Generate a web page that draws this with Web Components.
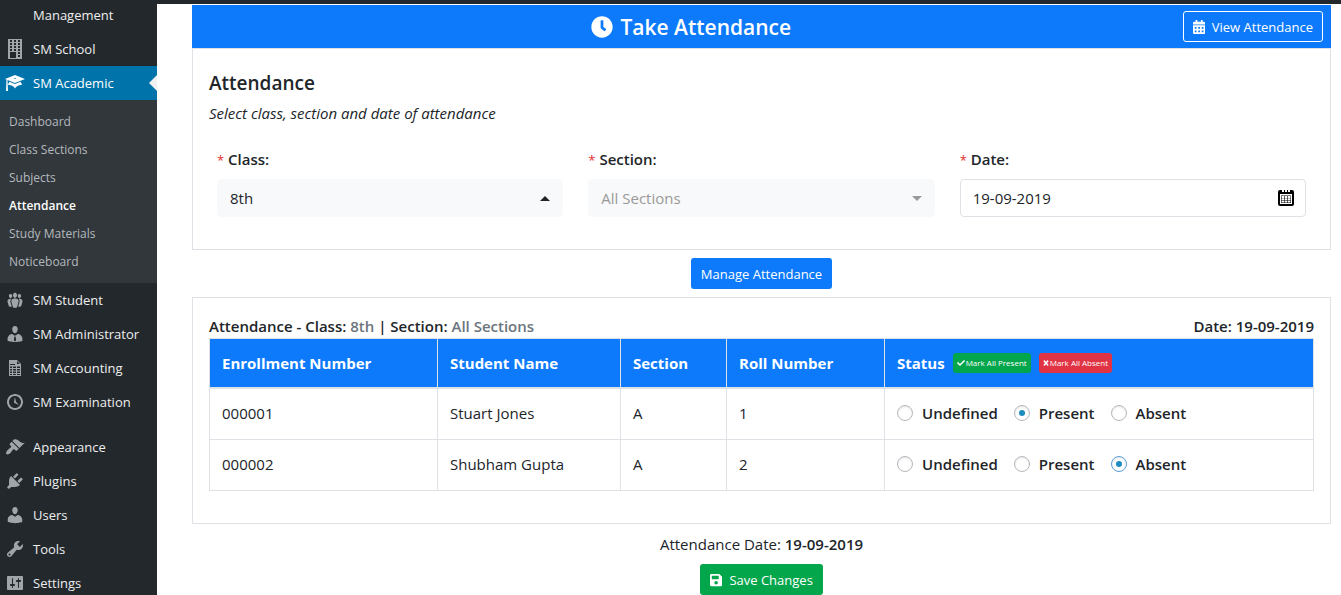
<!DOCTYPE html>
<html lang="en">
<head>
<meta charset="utf-8">
<title>Take Attendance</title>
<style>
  body {
    margin: 0;
    background: #fff;
    color: #212529;
    font: 15px/24px "Open Sans", "Noto Sans", sans-serif;
  }
</style>
</head>
<body>

<app-shell>
  <side-menu slot="menu">
    <menu-item>Management</menu-item>
    <menu-item icon="building">SM School</menu-item>
    <menu-item icon="cap" current>SM Academic</menu-item>
    <sub-menu items="Dashboard,Class Sections,Subjects,Attendance,Study Materials,Noticeboard" current="Attendance"></sub-menu>
    <menu-item icon="groups">SM Student</menu-item>
    <menu-item icon="businessman">SM Administrator</menu-item>
    <menu-item icon="spreadsheet">SM Accounting</menu-item>
    <menu-item icon="clock">SM Examination</menu-item>
    <menu-item icon="brush" separated>Appearance</menu-item>
    <menu-item icon="plug">Plugins</menu-item>
    <menu-item icon="user">Users</menu-item>
    <menu-item icon="wrench">Tools</menu-item>
    <menu-item icon="sliders">Settings</menu-item>
  </side-menu>

  <page-header>
    Take Attendance
    <action-button slot="action" kind="outline" icon="fa-calendar">View Attendance</action-button>
  </page-header>
  <filter-card></filter-card>
  <center-row><action-button kind="primary">Manage Attendance</action-button></center-row>
  <attendance-card></attendance-card>
  <center-row class="date">Attendance Date: <b>19-09-2019</b></center-row>
  <center-row><action-button kind="success" icon="fa-save">Save Changes</action-button></center-row>
</app-shell>

<style>
  .date { padding: 8px 0; }
  .date b { font-weight: 600; }
</style>

<script>
const ICONS = {
  building: ['0 0 20 20', 'M3 20h14V0H3v20zM7 3H5V1h2v2zm4 0H9V1h2v2zm4 0h-2V1h2v2zM7 6H5V4h2v2zm4 0H9V4h2v2zm4 0h-2V4h2v2zM7 9H5V7h2v2zm4 0H9V7h2v2zm4 0h-2V7h2v2zm-8 3H5v-2h2v2zm4 0H9v-2h2v2zm4 0h-2v-2h2v2zm-4 7H5v-6h6v6zm4-4h-2v-2h2v2zm0 3h-2v-2h2v2z'],
  cap: ['0 0 20 20', 'M10 10L2.54 7.02 3 18H1l.48-11.41L0 6l10-4 10 4zm0-5c-.55 0-1 .22-1 .5s.45.5 1 .5 1-.22 1-.5-.45-.5-1-.5zm0 6l5.57-2.23c.71.94 1.2 2.07 1.36 3.3-.3-.04-.61-.07-.93-.07-2.55 0-4.78 1.37-6 3.41C8.78 13.37 6.55 12 4 12c-.32 0-.63.03-.93.07.16-1.23.65-2.36 1.36-3.3z'],
  groups: ['0 0 20 20', 'M8.03 4.46c-.29 1.28.55 3.46 1.97 3.46 1.41 0 2.25-2.18 1.96-3.46-.22-.98-1.08-1.63-1.96-1.63-.89 0-1.74.65-1.97 1.63zm-4.13.9c-.25 1.08.47 2.93 1.67 2.93s1.92-1.85 1.67-2.93c-.19-.83-.92-1.39-1.67-1.39s-1.48.56-1.67 1.39zm8.86 0c-.25 1.08.47 2.93 1.66 2.93 1.2 0 1.92-1.85 1.67-2.93-.19-.83-.92-1.39-1.67-1.39-.74 0-1.47.56-1.66 1.39zm-.59 11.43l1.25-4.3C14.2 10 12.71 8.47 10 8.47c-2.72 0-4.21 1.53-3.44 4.02l1.26 4.3C8.05 17.51 9 18 10 18c.98 0 1.94-.49 2.17-1.21zm-6.1-7.63c-.49.67-.96 1.83-.42 3.59l1.12 3.79c-.34.2-.77.31-1.2.31-.85 0-1.65-.41-1.85-1.03l-1.07-3.65c-.65-2.11.61-3.4 2.92-3.4.27 0 .54.02.79.06-.1.1-.2.22-.29.33zm8.35-.39c2.31 0 3.58 1.29 2.92 3.4l-1.07 3.65c-.2.62-1 1.03-1.85 1.03-.43 0-.86-.11-1.2-.31l1.11-3.77c.55-1.78.08-2.94-.42-3.61-.08-.11-.18-.23-.28-.33.25-.04.51-.06.79-.06z'],
  businessman: ['0 0 20 20', 'M10 9.25c-2.27 0-2.73-3.44-2.73-3.44C7 4.02 7.82 2 9.97 2c2.16 0 2.98 2.02 2.71 3.81 0 0-.41 3.44-2.68 3.44zM7.2 10l2 1.6h1.6l2-1.6c2.4 0 4.6 2.3 4.6 4.6V17s-3.6 1-7.4 1-7.4-1-7.4-1v-2.4C2.6 12.3 4.7 10 7.2 10zm2.2 2.5l-.6 3.8 1.2 1.2 1.2-1.2-.6-3.8z'],
  spreadsheet: ['0 0 20 20', 'M12 2l4 4v12H4V2h8zm0 4h3l-3-3v3zM5 6v1h5V6H5zm0 2.5V10h2V8.5H5zm3 0V10h3V8.5H8zm4 0V10h3V8.5h-3zM5 11v1.5h2V11H5zm3 0v1.5h3V11H8zm4 0v1.5h3V11h-3zM5 13.5V15h2v-1.5H5zm3 0V15h3v-1.5H8zm4 0V15h3v-1.5h-3zM5 16v1h2v-1H5zm3 0v1h3v-1H8zm4 0v1h3v-1h-3z'],
  clock: ['0 0 20 20', 'M10 2c4.42 0 8 3.58 8 8s-3.58 8-8 8-8-3.58-8-8 3.58-8 8-8zm0 14c3.31 0 6-2.69 6-6s-2.69-6-6-6-6 2.69-6 6 2.69 6 6 6zm-.71-5.29c.07.05.14.1.23.15l-.02.02L14 13l-3.03-3.19L10 5l-.97 4.81h.01c0 .02-.01.05-.02.09S9 9.97 9 10c0 .28.1.52.29.71z'],
  brush: ['0 0 20 20', 'M14.48 11.06L7.41 3.99l1.5-1.5c.5-.56 2.3-.47 3.51.32 1.21.8 1.43 1.28 2.91 2.1 1.18.64 2.45 1.26 4.45.85zm-.71.71L6.7 4.7 4.93 6.47c-.39.39-.39 1.02 0 1.41l1.06 1.06c.39.39.39 1.03 0 1.42-.6.6-1.43 1.11-2.21 1.69-.35.26-.7.53-1.01.84C1.43 14.23.4 16.08 1.4 17.07c.99 1 2.84-.03 4.18-1.36.31-.31.58-.66.85-1.02.57-.78 1.08-1.61 1.69-2.21.39-.39 1.02-.39 1.41 0l1.06 1.06c.39.39 1.02.39 1.41 0z'],
  plug: ['0 0 20 20', 'M13.11 4.36L9.87 7.6 8 5.73l3.24-3.24c.35-.34 1.05-.2 1.56.32.52.51.66 1.21.31 1.55zm-8 1.77l.91-1.12 9.01 9.01-1.19.84c-.71.71-2.63 1.16-3.82 1.16H6.14L4.9 17.26c-.59.59-1.54.59-2.12 0-.59-.58-.59-1.53 0-2.12l1.24-1.24v-3.88c0-1.13.4-3.19 1.09-3.89zm7.26 3.97l3.24-3.24c.34-.35 1.04-.21 1.55.31.52.51.66 1.21.31 1.55l-3.24 3.25z'],
  user: ['0 0 20 20', 'M10 9.25c-2.27 0-2.73-3.44-2.73-3.44C7 4.02 7.82 2 9.97 2c2.16 0 2.98 2.02 2.71 3.81 0 0-.41 3.44-2.68 3.44zm0 2.57L12.72 10c2.39 0 4.52 2.33 4.52 4.53v2.49s-3.65 1.13-7.24 1.13c-3.65 0-7.24-1.13-7.24-1.13v-2.49c0-2.25 1.94-4.48 4.47-4.48z'],
  wrench: ['0 0 20 20', 'M16.68 9.77c-1.34 1.34-3.3 1.67-4.95.99l-5.41 6.52c-.99.99-2.59.99-3.58 0s-.99-2.59 0-3.57l6.52-5.42c-.68-1.65-.35-3.61.99-4.95 1.28-1.28 3.12-1.62 4.72-1.06l-2.89 2.89 2.82 2.82 2.86-2.87c.53 1.58.18 3.39-1.08 4.65zM3.81 16.21c.4.39 1.04.39 1.43 0 .4-.4.4-1.04 0-1.43-.39-.4-1.03-.4-1.43 0-.39.39-.39 1.03 0 1.43z'],
  sliders: ['0 0 20 20', 'M18 16V4c0-.55-.45-1-1-1H3c-.55 0-1 .45-1 1v12c0 .55.45 1 1 1h14c.55 0 1-.45 1-1zM8 11h1c.55 0 1 .45 1 1s-.45 1-1 1H8v1.5c0 .28-.22.5-.5.5s-.5-.22-.5-.5V13H6c-.55 0-1-.45-1-1s.45-1 1-1h1V5.5c0-.28.22-.5.5-.5s.5.22.5.5V11zm5-2h-1c-.55 0-1-.45-1-1s.45-1 1-1h1V5.5c0-.28.22-.5.5-.5s.5.22.5.5V7h1c.55 0 1 .45 1 1s-.45 1-1 1h-1v5.5c0 .28-.22.5-.5.5s-.5-.22-.5-.5V9z'],
  'fa-clock': ['0 0 512 512', 'M256,8C119,8,8,119,8,256S119,504,256,504,504,393,504,256,393,8,256,8Zm92.49,313h0l-20,25a16,16,0,0,1-22.49,2.5h0l-67-49.72a40,40,0,0,1-15-31.23V112a16,16,0,0,1,16-16h32a16,16,0,0,1,16,16V256l58,42.5A16,16,0,0,1,348.49,321Z'],
  'fa-calendar': ['0 0 448 512', 'M0 464c0 26 22 48 48 48h352c26 0 48-22 48-48V192H0zM448 160v-48c0-26-22-48-48-48h-48V12c0-7-5-12-12-12h-40c-7 0-12 5-12 12v52H160V12c0-7-5-12-12-12h-40c-7 0-12 5-12 12v52H48c-26 0-48 22-48 48v48zM64 256h64v64H64zm128 0h64v64h-64zm128 0h64v64h-64zM64 384h64v64H64zm128 0h64v64h-64zm128 0h64v64h-64z'],
  'fa-save': ['0 0 448 512', 'M433.941 129.941l-83.882-83.882A48 48 0 0 0 316.118 32H48C21.49 32 0 53.49 0 80v352c0 26.51 21.49 48 48 48h352c26.51 0 48-21.49 48-48V163.882a48 48 0 0 0-14.059-33.941zM224 416c-35.346 0-64-28.654-64-64 0-35.346 28.654-64 64-64s64 28.654 64 64c0 35.346-28.654 64-64 64zm96-304.52V212c0 6.627-5.373 12-12 12H76c-6.627 0-12-5.373-12-12V108c0-6.627 5.373-12 12-12h228.52c3.183 0 6.235 1.264 8.485 3.515l3.48 3.48A11.996 11.996 0 0 1 320 111.48z'],
  'fa-check': ['0 0 512 512', 'M173.898 439.404l-166.4-166.4c-9.997-9.997-9.997-26.206 0-36.204l36.203-36.204c9.997-9.998 26.207-9.998 36.204 0L192 312.69 432.095 72.596c9.997-9.997 26.207-9.997 36.204 0l36.203 36.204c9.997 9.997 9.997 26.206 0 36.204l-294.4 294.401c-9.998 9.997-26.207 9.997-36.204-.001z'],
  'fa-times': ['0 0 384 512', 'M20 136l68-68 104 104L296 68l68 68-104 120 104 120-68 68-104-104L88 444l-68-68 104-120z'],
  calendar: ['0 0 16 16', 'M2 0h2v2h2V0h1v2h2V0h1v2h2V0h2a2 2 0 0 1 2 2v12a2 2 0 0 1-2 2H2a2 2 0 0 1-2-2V2a2 2 0 0 1 2-2zm0 4v10h12V4zM3 5.4h10v7.700H3zm.5.500v2h2.600v-2zm3.200 0v2h2.600v-2zm3.200 0v2h2.600v-2zM3.500 8.300v2h2.600v-2zm3.200 0v2h2.600v-2zm3.200 0v2h2.600v-2zM3.500 10.700v1.900h2.600v-1.900zm3.200 0v1.900h2.600v-1.900zm3.200 0v1.900h2.600v-1.900z'],
};

function icon(name) {
  if (!ICONS[name]) return '';
  const [box, path] = ICONS[name];
  return `<svg viewBox="${box}" fill="currentColor" fill-rule="evenodd" aria-hidden="true"><path d="${path}"/></svg>`;
}

class BaseElement extends HTMLElement {
  constructor() {
    super();
    this.attachShadow({mode: 'open'});
  }

  connectedCallback() {
    this.shadowRoot.innerHTML = this.template();
  }
}

class AppShell extends BaseElement {
  template() {
    return `
      <style>
        :host {
          display: grid;
          grid-template: 4px minmax(0, 1fr) / 157px minmax(0, 1fr);
          height: 100vh;
          overflow: hidden;
        }
        header {
          grid-column: 1 / -1;
          background: #23282d;
        }
        main {
          padding: 1px 10px 0 35px;
        }
      </style>
      <header></header>
      <slot name="menu"></slot>
      <main><slot></slot></main>
    `;
  }
}
customElements.define('app-shell', AppShell);

class SideMenu extends BaseElement {
  template() {
    return `
      <style>
        :host {
          display: block;
          overflow: hidden;
          background: #23282d;
          font-size: 13px;
          line-height: 18px;
        }
        nav {
          /* the first entry is scrolled partly under the top bar */
          margin-top: -6px;
        }
      </style>
      <nav><slot></slot></nav>
    `;
  }
}
customElements.define('side-menu', SideMenu);

class MenuItem extends BaseElement {
  template() {
    return `
      <style>
        :host {
          display: block;
        }
        :host([separated]) {
          margin-top: 11px;
        }
        a {
          position: relative;
          display: grid;
          grid-template-columns: 20px 1fr;
          gap: 8px;
          align-items: center;
          min-height: 34px;
          padding: 0 5px;
          box-sizing: border-box;
          color: #eee;
          text-decoration: none;
        }
        span {
          grid-column: 2;
        }
        svg {
          width: 20px;
          height: 20px;
          color: #a0a5aa;
        }
        :host([current]) a {
          background: #0073aa;
          color: #fff;
        }
        :host([current]) svg {
          color: #fff;
        }
        :host([current]) a::after {
          content: '';
          position: absolute;
          right: 0;
          top: 9px;
          border: 8px solid transparent;
          border-left: none;
          border-right-color: #f1f1f1;
        }
      </style>
      <a href="#">${icon(this.getAttribute('icon'))}<span><slot></slot></span></a>
    `;
  }
}
customElements.define('menu-item', MenuItem);

class SubMenu extends BaseElement {
  template() {
    const current = this.getAttribute('current');
    const links = this.getAttribute('items').split(',').map((name) =>
      `<li><a href="#" class="${name === current ? 'current' : ''}">${name}</a></li>`).join('');

    return `
      <style>
        :host {
          display: block;
          font-size: 12px;
        }
        ul {
          margin: 0;
          padding: 8px 0 7px;
          list-style: none;
          background: #32373c;
        }
        a {
          display: block;
          padding: 5px 9px;
          color: #b4b9be;
          text-decoration: none;
        }
        .current {
          color: #fff;
          font-weight: 600;
        }
      </style>
      <ul>${links}</ul>
    `;
  }
}
customElements.define('sub-menu', SubMenu);

class PageHeader extends BaseElement {
  template() {
    return `
      <style>
        :host {
          display: flex;
          align-items: center;
          height: 43px;
          padding: 0 8px;
          background: #0d7afb;
          color: #fff;
        }
        h1 {
          flex: 1;
          display: flex;
          justify-content: center;
          align-items: center;
          gap: 7px;
          margin: 0;
          font-size: 21px;
          font-weight: 600;
        }
        svg {
          width: 22px;
          height: 22px;
        }
      </style>
      <h1>${icon('fa-clock')}<span><slot></slot></span></h1>
      <slot name="action"></slot>
    `;
  }
}
customElements.define('page-header', PageHeader);

class ActionButton extends BaseElement {
  template() {
    return `
      <style>
        :host {
          display: inline-block;
          vertical-align: top;
        }
        button {
          display: flex;
          align-items: center;
          gap: 7px;
          height: 31px;
          padding: 0 9px;
          border: 1px solid transparent;
          border-radius: 3px;
          color: #fff;
          font: inherit;
          font-size: 13px;
        }
        svg {
          height: 14px;
        }
        :host([kind="outline"]) button {
          background: none;
          border-color: #fff;
        }
        :host([kind="primary"]) button {
          background: #0d7afb;
        }
        :host([kind="success"]) button {
          background: #04a64b;
        }
        :host([kind="danger"]) button {
          background: #e03444;
        }
        :host([small]) button {
          gap: 1px;
          height: 20px;
          padding: 0 3px;
          font-size: 8px;
          font-weight: 400;
          line-height: 18px;
        }
        :host([small]) svg {
          height: 8px;
        }
      </style>
      <button type="button">${icon(this.getAttribute('icon'))}<span><slot></slot></span></button>
    `;
  }
}
customElements.define('action-button', ActionButton);

class CenterRow extends BaseElement {
  template() {
    return `
      <style>
        :host {
          display: block;
          text-align: center;
        }
      </style>
      <slot></slot>
    `;
  }
}
customElements.define('center-row', CenterRow);

class FilterCard extends BaseElement {
  template() {
    return `
      <style>
        :host {
          display: block;
          margin-bottom: 8px;
          padding: 22px 16px 32px;
          border: 1px solid #dee2e6;
        }
        h2 {
          margin: 0 0 6px;
          font-size: 19px;
          font-weight: 600;
        }
        p {
          margin: 0;
          font-style: italic;
        }
        form {
          display: grid;
          grid-template-columns: repeat(3, 1fr);
          gap: 25px;
          margin-top: 22px;
          padding: 0 8px;
        }
        label {
          display: block;
          margin-bottom: 8px;
          font-weight: 600;
        }
        i {
          color: #e02b2b;
          font-size: 13px;
          font-style: normal;
          font-weight: 400;
          line-height: 1;
        }
        .box {
          display: flex;
          align-items: center;
          position: relative;
        }
        select, input {
          width: 100%;
          height: 38px;
          padding: 0 12px;
          box-sizing: border-box;
          border: 1px solid #f8f9fa;
          border-radius: 4px;
          background: #f8f9fa;
          color: #212529;
          font: inherit;
          appearance: none;
        }
        select.empty {
          color: #999;
        }
        input {
          border-color: #dee2e6;
          background: #fff;
        }
        .caret {
          position: absolute;
          right: 13px;
          border: 5px solid transparent;
          border-top-color: #999;
          border-bottom: none;
        }
        .caret.up {
          border-top: none;
          border-bottom: 5px solid #212529;
        }
        svg {
          position: absolute;
          right: 12px;
          width: 16px;
          height: 16px;
          color: #000;
        }
      </style>
      <h2>Attendance</h2>
      <p>Select class, section and date of attendance</p>
      <form>
        <div>
          <label for="class"><i>*</i> Class:</label>
          <div class="box">
            <select id="class"><option>8th</option></select>
            <span class="caret up"></span>
          </div>
        </div>
        <div>
          <label for="section"><i>*</i> Section:</label>
          <div class="box">
            <select id="section" class="empty"><option>All Sections</option></select>
            <span class="caret"></span>
          </div>
        </div>
        <div>
          <label for="date"><i>*</i> Date:</label>
          <div class="box">
            <input id="date" type="text" value="19-09-2019">
            ${icon('calendar')}
          </div>
        </div>
      </form>
    `;
  }
}
customElements.define('filter-card', FilterCard);

class AttendanceCard extends BaseElement {
  constructor() {
    super();
    this.students = [
      {id: '000001', name: 'Stuart Jones', section: 'A', roll: 1, status: 'Present'},
      {id: '000002', name: 'Shubham Gupta', section: 'A', roll: 2, status: 'Absent', active: true},
    ];
  }

  row(student) {
    const radios = ['Undefined', 'Present', 'Absent'].map((status) => `
      <label>
        <input type="radio" name="status-${student.id}" ${status === student.status ? 'checked' : ''}
          class="${student.active ? 'active' : ''}">
        ${status}
      </label>`).join('');

    return `
      <tr>
        <td>${student.id}</td>
        <td>${student.name}</td>
        <td>${student.section}</td>
        <td>${student.roll}</td>
        <td><div class="status">${radios}</div></td>
      </tr>`;
  }

  template() {
    return `
      <style>
        :host {
          display: block;
          margin-top: 8px;
          padding: 16px 16px 32px;
          border: 1px solid #dee2e6;
        }
        .summary {
          display: flex;
          justify-content: space-between;
          font-weight: 600;
        }
        .muted {
          color: #6c757d;
        }
        table {
          width: 100%;
          table-layout: fixed;
          border-collapse: collapse;
        }
        col.id { width: 228px; }
        col.name { width: 183px; }
        col.section { width: 106px; }
        col.roll { width: 158px; }
        th, td {
          height: 48px;
          padding: 0 12px;
          border: 1px solid #dee2e6;
          text-align: left;
        }
        td {
          padding-bottom: 2px;
        }
        th {
          border-bottom-width: 2px;
          background: #0d7afb;
          color: #fff;
          font-weight: 700;
        }
        .head, .status, label {
          display: flex;
          align-items: center;
        }
        .head {
          gap: 8px;
        }
        .status {
          gap: 16px;
        }
        label {
          gap: 9px;
          font-weight: 600;
        }
        input {
          display: grid;
          place-items: center;
          width: 16px;
          height: 16px;
          margin: 0;
          border: 1px solid #b4b9be;
          border-radius: 50%;
          background: #fff;
          appearance: none;
          box-shadow: inset 0 1px 2px rgba(0, 0, 0, .1);
        }
        input:checked::before {
          content: '';
          width: 6px;
          height: 6px;
          border-radius: 50%;
          background: #1e8cbe;
        }
        input.active:checked {
          border-color: #5b9dd9;
        }
      </style>
      <div class="summary">
        <span>Attendance - Class: <span class="muted">8th</span> | Section: <span class="muted">All Sections</span></span>
        <span>Date: 19-09-2019</span>
      </div>
      <table>
        <colgroup><col class="id"><col class="name"><col class="section"><col class="roll"><col></colgroup>
        <thead>
          <tr>
            <th>Enrollment Number</th>
            <th>Student Name</th>
            <th>Section</th>
            <th>Roll Number</th>
            <th>
              <div class="head">
                Status
                <action-button small kind="success" icon="fa-check">Mark All Present</action-button>
                <action-button small kind="danger" icon="fa-times">Mark All Absent</action-button>
              </div>
            </th>
          </tr>
        </thead>
        <tbody>${this.students.map((student) => this.row(student)).join('')}</tbody>
      </table>
    `;
  }
}
customElements.define('attendance-card', AttendanceCard);
</script>
</body>
</html>
